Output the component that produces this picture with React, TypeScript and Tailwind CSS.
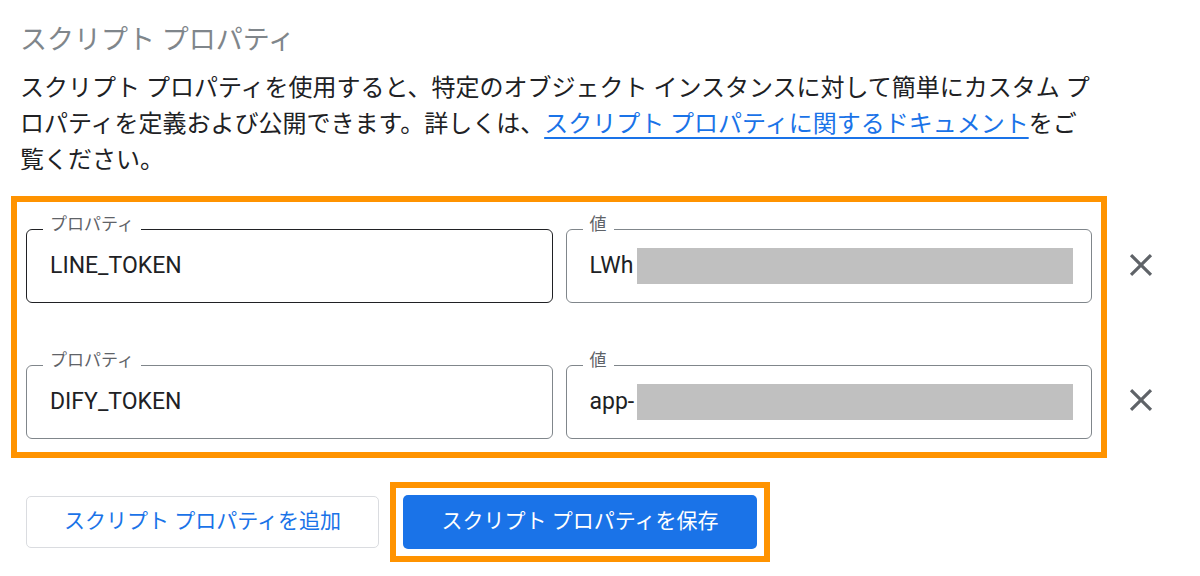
import { useState } from "react"

type Prop = { key: string; value: string; focused?: boolean }

const initialProps: Prop[] = [
  { key: "LINE_TOKEN", value: "LWh", focused: true },
  { key: "DIFY_TOKEN", value: "app-" },
]

function CloseIcon() {
  return (
    <svg viewBox="0 0 24 24" className="w-[38px] h-[38px] fill-[#5f6368]">
      <path d="M19 6.41L17.59 5 12 10.59 6.41 5 5 6.41 10.59 12 5 17.59 6.41 19 12 13.41 17.59 19 19 17.59 13.41 12z" />
    </svg>
  )
}

function Field({ label, focused, children }: { label: string; focused?: boolean; children: React.ReactNode }) {
  return (
    <div
      className={
        focused
          ? "relative h-[74px] rounded-[6px] border-[1.5px] border-[#202124] flex items-center pl-[23px]"
          : "relative h-[74px] rounded-[6px] border border-[#80868b] flex items-center pl-[23px]"
      }
    >
      <span className="absolute left-[16px] -top-[19px] bg-white px-[7px] text-[17px] leading-[26px] text-[#5f6368]">
        {label}
      </span>
      {children}
    </div>
  )
}

export default function App() {
  const [props] = useState(initialProps)

  return (
    <div
      className="w-[1200px] h-[576px] bg-white pl-[11px] pt-[22px] overflow-hidden"
      style={{ fontFamily: "Roboto, 'Noto Sans CJK JP', sans-serif" }}
    >
      {/* Header */}
      <div className="pl-[9px]">
        <h2 className="text-[27px] leading-[36px] text-[#80868b]">スクリプト プロパティ</h2>
        <p className="mt-[12px] text-[24px] leading-[36px] text-[#202124] whitespace-nowrap">
          スクリプト プロパティを使用すると、特定のオブジェクト インスタンスに対して簡単にカスタム プ
          <br />
          ロパティを定義および公開できます。詳しくは、
          <a href="#" className="text-[#1a73e8] underline underline-offset-[5px]">
            スクリプト プロパティに関するドキュメント
          </a>
          をご
          <br />
          覧ください。
        </p>
      </div>

      {/* Properties */}
      <div className="mt-[18px] flex items-start">
        <div className="w-[1096px] border-[6px] border-[#ff9300] pt-[27px] pb-[13px] px-[9px] flex flex-col gap-[62px]">
          {props.map((p) => (
            <div key={p.key} className="grid grid-cols-2 gap-[13px]">
              <Field label="プロパティ" focused={p.focused}>
                <span className="text-[23px] text-[#202124]">{p.key}</span>
              </Field>
              <Field label="値">
                <span className="w-[47px] text-[23px] text-[#202124]">{p.value}</span>
                <div className="flex-1 h-[36px] bg-[#c0c0c0] mr-[18px]" />
              </Field>
            </div>
          ))}
        </div>
        <div className="ml-[15px] pt-[50px] flex flex-col gap-[97px]">
          {props.map((p) => (
            <button key={p.key} className="flex items-center justify-center">
              <CloseIcon />
            </button>
          ))}
        </div>
      </div>

      {/* Buttons */}
      <div className="mt-[24px] flex items-center">
        <button className="ml-[15px] w-[353px] h-[52px] rounded-[5px] border border-[#dadce0] text-[21px] text-[#1a73e8]">
          スクリプト プロパティを追加
        </button>
        <div className="ml-[11px] border-[6px] border-[#ff9300] p-[7px]">
          <button className="w-[354px] h-[54px] rounded-[5px] bg-[#1a73e8] text-[21px] text-white">
            スクリプト プロパティを保存
          </button>
        </div>
      </div>
    </div>
  )
}
